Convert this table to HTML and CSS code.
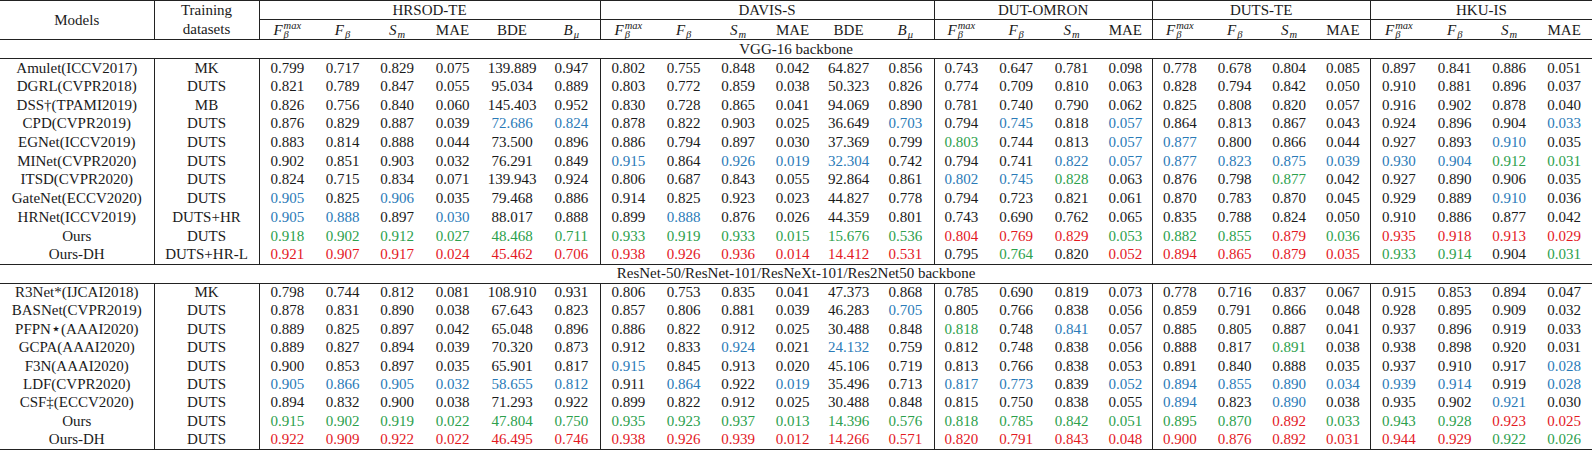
FILE: index.html
```html
<!DOCTYPE html>
<html lang="en">
<head>
<meta charset="utf-8">
<title>Results</title>
<link rel="stylesheet" href="styles.css">
</head>
<body>
<table class="results">
<colgroup>
<col class="w154"><col class="w105">
<col class="w56"><col class="w55"><col class="w54"><col class="w57"><col class="w62"><col class="w57">
<col class="w56"><col class="w55"><col class="w54"><col class="w55"><col class="w57"><col class="w57">
<col class="w54"><col class="w56"><col class="w55"><col class="w53">
<col class="w55"><col class="w55"><col class="w54"><col class="w54">
<col class="w57"><col class="w55"><col class="w54"><col class="w56">
</colgroup>
<thead>
<tr class="hr1">
<td rowspan="2" class="vr hb">Models</td>
<td rowspan="2" class="vr hb two">Training<br>datasets</td>
<td colspan="6" class="grp">HRSOD-TE</td>
<td colspan="6" class="grp vl">DAVIS-S</td>
<td colspan="4" class="grp vl">DUT-OMRON</td>
<td colspan="4" class="grp vl">DUTS-TE</td>
<td colspan="4" class="grp vl">HKU-IS</td>
</tr>
<tr class="hr2">
<td><i>F</i><span class="ss"><span>max</span><span>β</span></span></td><td><i>F</i><span class="sb">β</span></td><td><i>S</i><span class="sb">m</span></td><td>MAE</td><td>BDE</td><td><i>B</i><span class="sb">μ</span></td>
<td class="vl"><i>F</i><span class="ss"><span>max</span><span>β</span></span></td><td><i>F</i><span class="sb">β</span></td><td><i>S</i><span class="sb">m</span></td><td>MAE</td><td>BDE</td><td><i>B</i><span class="sb">μ</span></td>
<td class="vl"><i>F</i><span class="ss"><span>max</span><span>β</span></span></td><td><i>F</i><span class="sb">β</span></td><td><i>S</i><span class="sb">m</span></td><td>MAE</td>
<td class="vl"><i>F</i><span class="ss"><span>max</span><span>β</span></span></td><td><i>F</i><span class="sb">β</span></td><td><i>S</i><span class="sb">m</span></td><td>MAE</td>
<td class="vl"><i>F</i><span class="ss"><span>max</span><span>β</span></span></td><td><i>F</i><span class="sb">β</span></td><td><i>S</i><span class="sb">m</span></td><td>MAE</td>
</tr>
</thead>
<tbody class="sec1">
<tr class="title"><td colspan="26">VGG-16 backbone</td></tr>
<tr><td class="vr">Amulet(ICCV2017)</td><td class="vr">MK</td>
<td>0.799</td><td>0.717</td><td>0.829</td><td>0.075</td><td>139.889</td><td>0.947</td>
<td class="vl">0.802</td><td>0.755</td><td>0.848</td><td>0.042</td><td>64.827</td><td>0.856</td>
<td class="vl">0.743</td><td>0.647</td><td>0.781</td><td>0.098</td>
<td class="vl">0.778</td><td>0.678</td><td>0.804</td><td>0.085</td>
<td class="vl">0.897</td><td>0.841</td><td>0.886</td><td>0.051</td></tr>
<tr><td class="vr">DGRL(CVPR2018)</td><td class="vr">DUTS</td>
<td>0.821</td><td>0.789</td><td>0.847</td><td>0.055</td><td>95.034</td><td>0.889</td>
<td class="vl">0.803</td><td>0.772</td><td>0.859</td><td>0.038</td><td>50.323</td><td>0.826</td>
<td class="vl">0.774</td><td>0.709</td><td>0.810</td><td>0.063</td>
<td class="vl">0.828</td><td>0.794</td><td>0.842</td><td>0.050</td>
<td class="vl">0.910</td><td>0.881</td><td>0.896</td><td>0.037</td></tr>
<tr><td class="vr">DSS†(TPAMI2019)</td><td class="vr">MB</td>
<td>0.826</td><td>0.756</td><td>0.840</td><td>0.060</td><td>145.403</td><td>0.952</td>
<td class="vl">0.830</td><td>0.728</td><td>0.865</td><td>0.041</td><td>94.069</td><td>0.890</td>
<td class="vl">0.781</td><td>0.740</td><td>0.790</td><td>0.062</td>
<td class="vl">0.825</td><td>0.808</td><td>0.820</td><td>0.057</td>
<td class="vl">0.916</td><td>0.902</td><td>0.878</td><td>0.040</td></tr>
<tr><td class="vr">CPD(CVPR2019)</td><td class="vr">DUTS</td>
<td>0.876</td><td>0.829</td><td>0.887</td><td>0.039</td><td class="b">72.686</td><td class="b">0.824</td>
<td class="vl">0.878</td><td>0.822</td><td>0.903</td><td>0.025</td><td>36.649</td><td class="b">0.703</td>
<td class="vl">0.794</td><td class="b">0.745</td><td>0.818</td><td class="b">0.057</td>
<td class="vl">0.864</td><td>0.813</td><td>0.867</td><td>0.043</td>
<td class="vl">0.924</td><td>0.896</td><td>0.904</td><td class="b">0.033</td></tr>
<tr><td class="vr">EGNet(ICCV2019)</td><td class="vr">DUTS</td>
<td>0.883</td><td>0.814</td><td>0.888</td><td>0.044</td><td>73.500</td><td>0.896</td>
<td class="vl">0.886</td><td>0.794</td><td>0.897</td><td>0.030</td><td>37.369</td><td>0.799</td>
<td class="vl g">0.803</td><td>0.744</td><td>0.813</td><td class="b">0.057</td>
<td class="vl b">0.877</td><td>0.800</td><td>0.866</td><td>0.044</td>
<td class="vl">0.927</td><td>0.893</td><td class="b">0.910</td><td>0.035</td></tr>
<tr><td class="vr">MINet(CVPR2020)</td><td class="vr">DUTS</td>
<td>0.902</td><td>0.851</td><td>0.903</td><td>0.032</td><td>76.291</td><td>0.849</td>
<td class="vl b">0.915</td><td>0.864</td><td class="b">0.926</td><td class="b">0.019</td><td class="b">32.304</td><td>0.742</td>
<td class="vl">0.794</td><td>0.741</td><td class="b">0.822</td><td class="b">0.057</td>
<td class="vl b">0.877</td><td class="b">0.823</td><td class="b">0.875</td><td class="b">0.039</td>
<td class="vl b">0.930</td><td class="b">0.904</td><td class="g">0.912</td><td class="g">0.031</td></tr>
<tr><td class="vr">ITSD(CVPR2020)</td><td class="vr">DUTS</td>
<td>0.824</td><td>0.715</td><td>0.834</td><td>0.071</td><td>139.943</td><td>0.924</td>
<td class="vl">0.806</td><td>0.687</td><td>0.843</td><td>0.055</td><td>92.864</td><td>0.861</td>
<td class="vl b">0.802</td><td class="b">0.745</td><td class="g">0.828</td><td>0.063</td>
<td class="vl">0.876</td><td>0.798</td><td class="g">0.877</td><td>0.042</td>
<td class="vl">0.927</td><td>0.890</td><td>0.906</td><td>0.035</td></tr>
<tr><td class="vr">GateNet(ECCV2020)</td><td class="vr">DUTS</td>
<td class="b">0.905</td><td>0.825</td><td class="b">0.906</td><td>0.035</td><td>79.468</td><td>0.886</td>
<td class="vl">0.914</td><td>0.825</td><td>0.923</td><td>0.023</td><td>44.827</td><td>0.778</td>
<td class="vl">0.794</td><td>0.723</td><td>0.821</td><td>0.061</td>
<td class="vl">0.870</td><td>0.783</td><td>0.870</td><td>0.045</td>
<td class="vl">0.929</td><td>0.889</td><td class="b">0.910</td><td>0.036</td></tr>
<tr><td class="vr">HRNet(ICCV2019)</td><td class="vr">DUTS+HR</td>
<td class="b">0.905</td><td class="b">0.888</td><td>0.897</td><td class="b">0.030</td><td>88.017</td><td>0.888</td>
<td class="vl">0.899</td><td class="b">0.888</td><td>0.876</td><td>0.026</td><td>44.359</td><td>0.801</td>
<td class="vl">0.743</td><td>0.690</td><td>0.762</td><td>0.065</td>
<td class="vl">0.835</td><td>0.788</td><td>0.824</td><td>0.050</td>
<td class="vl">0.910</td><td>0.886</td><td>0.877</td><td>0.042</td></tr>
<tr><td class="vr">Ours</td><td class="vr">DUTS</td>
<td class="g">0.918</td><td class="g">0.902</td><td class="g">0.912</td><td class="g">0.027</td><td class="g">48.468</td><td class="g">0.711</td>
<td class="vl g">0.933</td><td class="g">0.919</td><td class="g">0.933</td><td class="g">0.015</td><td class="g">15.676</td><td class="g">0.536</td>
<td class="vl r">0.804</td><td class="r">0.769</td><td class="r">0.829</td><td class="g">0.053</td>
<td class="vl g">0.882</td><td class="g">0.855</td><td class="r">0.879</td><td class="g">0.036</td>
<td class="vl r">0.935</td><td class="r">0.918</td><td class="r">0.913</td><td class="r">0.029</td></tr>
<tr><td class="vr">Ours-DH</td><td class="vr">DUTS+HR-L</td>
<td class="r">0.921</td><td class="r">0.907</td><td class="r">0.917</td><td class="r">0.024</td><td class="r">45.462</td><td class="r">0.706</td>
<td class="vl r">0.938</td><td class="r">0.926</td><td class="r">0.936</td><td class="r">0.014</td><td class="r">14.412</td><td class="r">0.531</td>
<td class="vl">0.795</td><td class="g">0.764</td><td>0.820</td><td class="r">0.052</td>
<td class="vl r">0.894</td><td class="r">0.865</td><td class="r">0.879</td><td class="r">0.035</td>
<td class="vl g">0.933</td><td class="g">0.914</td><td>0.904</td><td class="g">0.031</td></tr>
</tbody>
<tbody class="sec2">
<tr class="title"><td colspan="26">ResNet-50/ResNet-101/ResNeXt-101/Res2Net50 backbone</td></tr>
<tr><td class="vr">R3Net*(IJCAI2018)</td><td class="vr">MK</td>
<td>0.798</td><td>0.744</td><td>0.812</td><td>0.081</td><td>108.910</td><td>0.931</td>
<td class="vl">0.806</td><td>0.753</td><td>0.835</td><td>0.041</td><td>47.373</td><td>0.868</td>
<td class="vl">0.785</td><td>0.690</td><td>0.819</td><td>0.073</td>
<td class="vl">0.778</td><td>0.716</td><td>0.837</td><td>0.067</td>
<td class="vl">0.915</td><td>0.853</td><td>0.894</td><td>0.047</td></tr>
<tr><td class="vr">BASNet(CVPR2019)</td><td class="vr">DUTS</td>
<td>0.878</td><td>0.831</td><td>0.890</td><td>0.038</td><td>67.643</td><td>0.823</td>
<td class="vl">0.857</td><td>0.806</td><td>0.881</td><td>0.039</td><td>46.283</td><td class="b">0.705</td>
<td class="vl">0.805</td><td>0.766</td><td>0.838</td><td>0.056</td>
<td class="vl">0.859</td><td>0.791</td><td>0.866</td><td>0.048</td>
<td class="vl">0.928</td><td>0.895</td><td>0.909</td><td>0.032</td></tr>
<tr><td class="vr">PFPN<span class="star">⋆</span>(AAAI2020)</td><td class="vr">DUTS</td>
<td>0.889</td><td>0.825</td><td>0.897</td><td>0.042</td><td>65.048</td><td>0.896</td>
<td class="vl">0.886</td><td>0.822</td><td>0.912</td><td>0.025</td><td>30.488</td><td>0.848</td>
<td class="vl g">0.818</td><td>0.748</td><td class="b">0.841</td><td>0.057</td>
<td class="vl">0.885</td><td>0.805</td><td>0.887</td><td>0.041</td>
<td class="vl">0.937</td><td>0.896</td><td>0.919</td><td>0.033</td></tr>
<tr><td class="vr">GCPA(AAAI2020)</td><td class="vr">DUTS</td>
<td>0.889</td><td>0.827</td><td>0.894</td><td>0.039</td><td>70.320</td><td>0.873</td>
<td class="vl">0.912</td><td>0.833</td><td class="b">0.924</td><td>0.021</td><td class="b">24.132</td><td>0.759</td>
<td class="vl">0.812</td><td>0.748</td><td>0.838</td><td>0.056</td>
<td class="vl">0.888</td><td>0.817</td><td class="g">0.891</td><td>0.038</td>
<td class="vl">0.938</td><td>0.898</td><td>0.920</td><td>0.031</td></tr>
<tr><td class="vr">F3N(AAAI2020)</td><td class="vr">DUTS</td>
<td>0.900</td><td>0.853</td><td>0.897</td><td>0.035</td><td>65.901</td><td>0.817</td>
<td class="vl b">0.915</td><td>0.845</td><td>0.913</td><td>0.020</td><td>45.106</td><td>0.719</td>
<td class="vl">0.813</td><td>0.766</td><td>0.838</td><td>0.053</td>
<td class="vl">0.891</td><td>0.840</td><td>0.888</td><td>0.035</td>
<td class="vl">0.937</td><td>0.910</td><td>0.917</td><td class="b">0.028</td></tr>
<tr><td class="vr">LDF(CVPR2020)</td><td class="vr">DUTS</td>
<td class="b">0.905</td><td class="b">0.866</td><td class="b">0.905</td><td class="b">0.032</td><td class="b">58.655</td><td class="b">0.812</td>
<td class="vl">0.911</td><td class="b">0.864</td><td>0.922</td><td class="b">0.019</td><td>35.496</td><td>0.713</td>
<td class="vl b">0.817</td><td class="b">0.773</td><td>0.839</td><td class="b">0.052</td>
<td class="vl b">0.894</td><td class="b">0.855</td><td class="b">0.890</td><td class="b">0.034</td>
<td class="vl b">0.939</td><td class="b">0.914</td><td>0.919</td><td class="b">0.028</td></tr>
<tr><td class="vr">CSF‡(ECCV2020)</td><td class="vr">DUTS</td>
<td>0.894</td><td>0.832</td><td>0.900</td><td>0.038</td><td>71.293</td><td>0.922</td>
<td class="vl">0.899</td><td>0.822</td><td>0.912</td><td>0.025</td><td>30.488</td><td>0.848</td>
<td class="vl">0.815</td><td>0.750</td><td>0.838</td><td>0.055</td>
<td class="vl b">0.894</td><td>0.823</td><td class="b">0.890</td><td>0.038</td>
<td class="vl">0.935</td><td>0.902</td><td class="b">0.921</td><td>0.030</td></tr>
<tr><td class="vr">Ours</td><td class="vr">DUTS</td>
<td class="g">0.915</td><td class="g">0.902</td><td class="g">0.919</td><td class="g">0.022</td><td class="g">47.804</td><td class="g">0.750</td>
<td class="vl g">0.935</td><td class="g">0.923</td><td class="g">0.937</td><td class="g">0.013</td><td class="g">14.396</td><td class="g">0.576</td>
<td class="vl g">0.818</td><td class="g">0.785</td><td class="g">0.842</td><td class="g">0.051</td>
<td class="vl g">0.895</td><td class="g">0.870</td><td class="r">0.892</td><td class="g">0.033</td>
<td class="vl g">0.943</td><td class="g">0.928</td><td class="r">0.923</td><td class="r">0.025</td></tr>
<tr><td class="vr">Ours-DH</td><td class="vr">DUTS</td>
<td class="r">0.922</td><td class="r">0.909</td><td class="r">0.922</td><td class="r">0.022</td><td class="r">46.495</td><td class="r">0.746</td>
<td class="vl r">0.938</td><td class="r">0.926</td><td class="r">0.939</td><td class="r">0.012</td><td class="r">14.266</td><td class="r">0.571</td>
<td class="vl r">0.820</td><td class="r">0.791</td><td class="r">0.843</td><td class="r">0.048</td>
<td class="vl r">0.900</td><td class="r">0.876</td><td class="r">0.892</td><td class="r">0.031</td>
<td class="vl r">0.944</td><td class="r">0.929</td><td class="g">0.922</td><td class="g">0.026</td></tr>
</tbody>
</table>
</body>
</html>
```

FILE: styles.css
```css
html, body {
  margin: 0;
  padding: 0;
  background: #ffffff;
}

body {
  font-family: "Liberation Serif", "Times New Roman", serif;
  font-size: 15px;
  color: #1a1a1a;
}

.results {
  width: 1592px;
  border-collapse: collapse;
  table-layout: fixed;
  border-top: 1px solid #222;
  border-bottom: 1px solid #222;
  font-family: "Liberation Serif", "Times New Roman", serif;
  font-size: 15px;
}

.w154 { width: 154px; }
.w105 { width: 105px; }
.w62 { width: 62px; }
.w57 { width: 57px; }
.w56 { width: 56px; }
.w55 { width: 55px; }
.w54 { width: 54px; }
.w53 { width: 53px; }

.results td {
  padding: 0;
  text-align: center;
  white-space: nowrap;
  font-family: "Liberation Serif", "Times New Roman", serif;
  font-size: 15px;
  font-weight: normal;
  line-height: 17px;
}

.hr1 { height: 19px; }
.hr2 { height: 20px; }

.hr1 td.grp {
  border-bottom: 1px solid #222;
  vertical-align: middle;
}

.results td.hb {
  border-bottom: 1px solid #222;
}

.results td.two {
  line-height: 19px;
}

.results .hr2 td {
  border-bottom: 1px solid #222;
  line-height: 18px;
}

.vr { border-right: 1px solid #222; }
.vl { border-left: 1px solid #222; }

.title td {
  height: 18px;
  border-top: 1px solid #222;
  border-bottom: 1px solid #222;
}

.sec1 tr { height: 18.7px; }
.sec2 tr { height: 18.45px; }
.sec1 tr.title, .sec2 tr.title { height: 19px; }

.results i {
  font-family: "Liberation Serif", serif;
  font-style: italic;
}

.results .sb {
  font-family: "Liberation Serif", serif;
  font-style: italic;
  font-size: 10.5px;
  vertical-align: -3px;
  line-height: 0;
  margin-left: 1px;
}

.results .ss {
  display: inline-flex;
  flex-direction: column;
  align-items: flex-start;
  font-family: "Liberation Serif", serif;
  font-style: italic;
  font-size: 10.5px;
  line-height: 9px;
  vertical-align: 6px;
  margin-left: 1px;
}

.results .star {
  font-family: "DejaVu Sans", sans-serif;
  font-size: 16px;
  line-height: 0;
}

.b { color: #2a7ab7; }
.g { color: #2ca04c; }
.r { color: #e3191f; }
```
